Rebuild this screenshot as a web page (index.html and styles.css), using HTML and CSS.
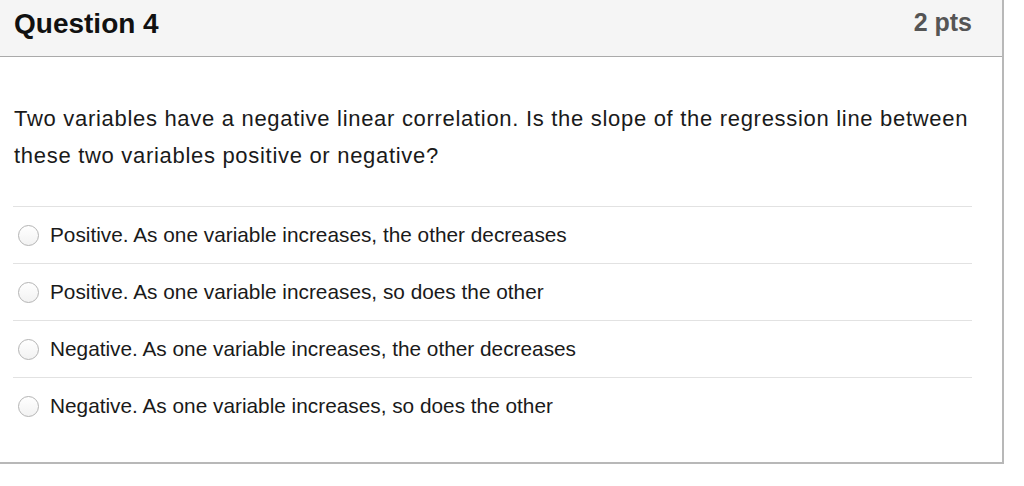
FILE: index.html
```html
<!DOCTYPE html>
<html>
<head>
<meta charset="utf-8">
<link rel="stylesheet" href="styles.css">
</head>
<body>
<div class="card">
  <div class="header">
    <span class="title">Question 4</span>
    <span class="pts">2 pts</span>
  </div>
  <div class="content">
    <p class="question">Two variables have a negative linear correlation. Is the slope of the regression line between these two variables positive or negative?</p>
    <div class="answers">
      <div class="answer"><span class="radio"></span><span class="label">Positive. As one variable increases, the other decreases</span></div>
      <div class="answer"><span class="radio"></span><span class="label">Positive. As one variable increases, so does the other</span></div>
      <div class="answer"><span class="radio"></span><span class="label">Negative. As one variable increases, the other decreases</span></div>
      <div class="answer"><span class="radio"></span><span class="label">Negative. As one variable increases, so does the other</span></div>
    </div>
  </div>
</div>
</body>
</html>
```
FILE: styles.css
```css
html, body {
  margin: 0;
  padding: 0;
  background: #ffffff;
}
body {
  font-family: "Liberation Sans", Arial, Helvetica, sans-serif;
  color: #222;
}
.card {
  width: 1002px;
  border-right: 2px solid #b8b8b8;
  border-bottom: 2px solid #b8b8b8;
  box-sizing: content-box;
}
.header {
  height: 48px;
  background: #f5f5f5;
  border-bottom: 1px solid #aaaaaa;
  display: flex;
  align-items: flex-start;
  justify-content: space-between;
  padding: 8px 30px 0 14px;
}
.title {
  font-weight: bold;
  font-size: 28px;
  line-height: 32px;
  color: #111;
}
.pts {
  font-weight: bold;
  font-size: 25px;
  line-height: 29px;
  color: #555;
}
.content {
  padding: 43px 30px 28px 13px;
}
.question {
  margin: 0 0 32px 1px;
  font-size: 22px;
  letter-spacing: 0.7px;
  line-height: 37px;
  color: #1a1a1a;
}
.answer {
  height: 56px;
  border-top: 1px solid #e2e2e2;
  display: flex;
  align-items: center;
}
.radio {
  width: 21px;
  height: 21px;
  border-radius: 50%;
  border: 1px solid #b4b4b4;
  background: linear-gradient(#ffffff, #f2f2f2);
  box-sizing: border-box;
  margin: 0 11px 0 5px;
  flex: none;
}
.label {
  font-size: 20.8px;
  color: #1a1a1a;
}
```
